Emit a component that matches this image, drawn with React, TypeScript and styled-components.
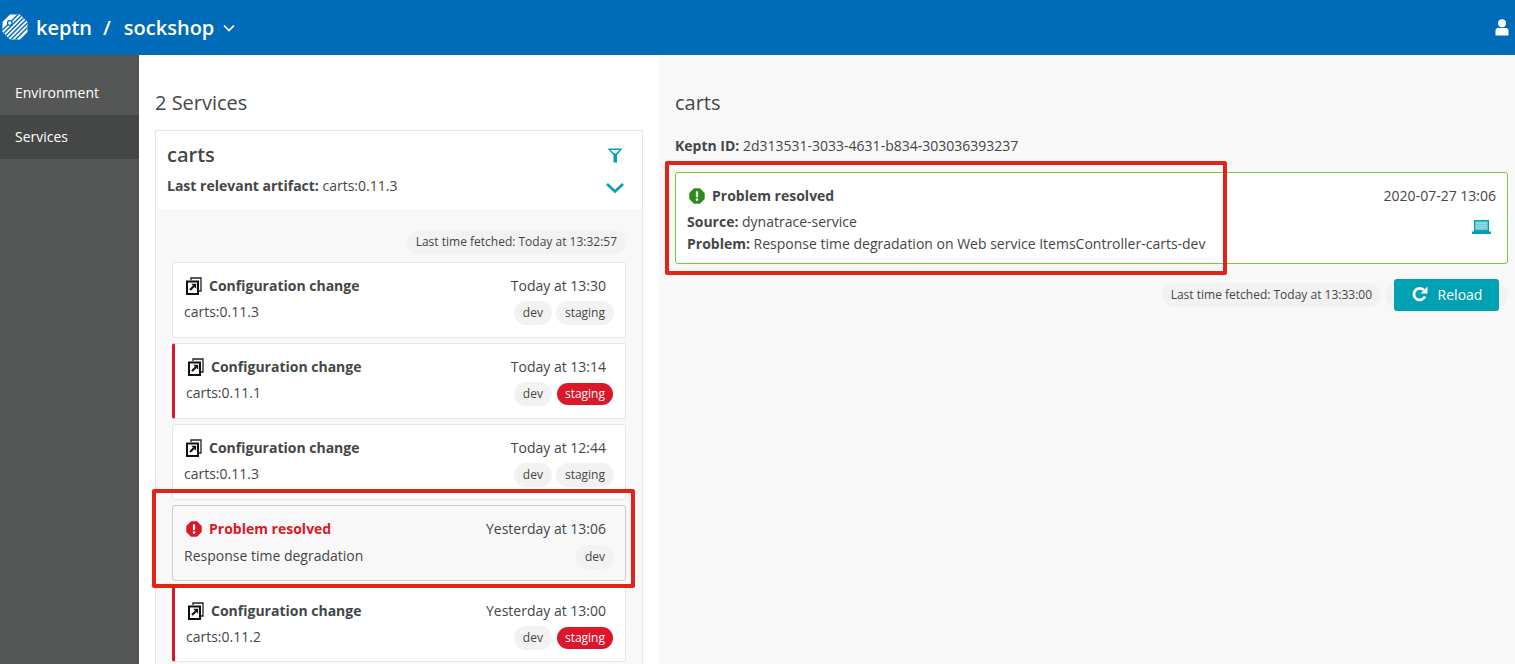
import React from "react";
import styled, { createGlobalStyle, css } from "styled-components";

const Global = createGlobalStyle`
  html, body { margin: 0; padding: 0; height: 100%; overflow: hidden; }
  body { font-family: "Open Sans", "Liberation Sans", sans-serif; font-size: 14px; line-height: 20px; color: #454646; }
  * { box-sizing: border-box; }
`;

const Page = styled.div`
  position: relative;
  width: 1515px;
  height: 664px;
  overflow: hidden;
  display: flex;
  flex-direction: column;
`;
const TopBar = styled.header`
  height: 55px;
  flex: none;
  background: #006bb8;
  color: #fff;
  display: flex;
  align-items: center;
  padding: 0 6px 0 2px;
`;
const LogoMark = styled.svg`
  width: 26px;
  height: 26px;
  margin-top: -2px;
`;
const Brand = styled.span`
  font-size: 20px;
  font-weight: 600;
  line-height: 55px;
  margin-left: 8px;
`;
const Slash = styled(Brand)`
  margin-left: 11px;
`;
const Project = styled(Brand)`
  margin-left: 13px;
`;
const BarChevron = styled.svg`
  width: 12px;
  height: 8px;
  margin: 1px 0 0 9px;
`;
const UserIcon = styled.svg`
  width: 14px;
  height: 17px;
  margin-left: auto;
`;
const Body = styled.div`
  flex: 1;
  display: flex;
  min-height: 0;
`;
const Sidebar = styled.nav`
  width: 139px;
  flex: none;
  background: #555656;
  padding-top: 16px;
`;
const NavItem = styled.div<{ $active?: boolean }>`
  height: 44px;
  line-height: 44px;
  padding-left: 15px;
  color: #fff;
  background: ${(p) => (p.$active ? "#454646" : "transparent")};
`;
const ListPane = styled.section`
  width: 520px;
  flex: none;
  background: #fff;
  padding: 36px 16px 0;
`;
const PaneTitle = styled.h2`
  margin: 0;
  font-size: 20px;
  font-weight: 400;
  line-height: 24px;
`;
const ServiceCard = styled.div`
  margin-top: 15px;
  border: 1px solid #e6e6e6;
  border-bottom: 0;
  height: 600px;
  background: #f8f8f8;
`;
const ServiceHead = styled.div`
  height: 78px;
  background: #fff;
  padding: 11px 18px 0 11px;
  display: flex;
  justify-content: space-between;
`;
const ServiceName = styled.div`
  font-size: 20px;
  font-weight: 600;
  line-height: 26px;
`;
const Artifact = styled.div`
  margin-top: 8px;
  line-height: 20px;
`;
const HeadIcons = styled.div`
  display: flex;
  flex-direction: column;
  align-items: center;
  padding-top: 6px;
  gap: 20px;
`;
const TealIcon = styled.svg`
  display: block;
  color: #00a1b2;
`;
const EventList = styled.div`
  padding: 21px 16px 0;
  display: flex;
  flex-direction: column;
`;
const Chip = styled.span`
  display: inline-flex;
  align-items: center;
  height: 24px;
  padding: 0 9px;
  border-radius: 12px;
  background: #f2f2f2;
  font-size: 12px;
  white-space: nowrap;
`;
const FetchedRow = styled.div`
  display: flex;
  justify-content: flex-end;
  margin-bottom: 8px;
`;
const EventTop = styled.div`
  display: flex;
  align-items: center;
  height: 24px;
  padding: 0 8px 0 2px;
`;
const EventTitle = styled.span<{ $error?: boolean }>`
  font-weight: 700;
  margin-left: 7px;
  color: ${(p) => (p.$error ? "#dc172a" : "#454646")};
`;
const When = styled.span`
  margin-left: auto;
`;
const EventBottom = styled.div`
  display: flex;
  align-items: flex-start;
  justify-content: space-between;
  margin-top: 2px;
  line-height: 24px;
`;
const EventCard = styled.div<{ $flag?: boolean; $selected?: boolean; $low?: boolean }>`
  height: 76px;
  flex: none;
  margin-bottom: 5px;
  background: ${(p) => (p.$selected ? "#f8f8f8" : "#fff")};
  border: 1px solid ${(p) => (p.$selected ? "#ccc" : "#e6e6e6")};
  border-radius: 3px;
  padding: ${(p) => (p.$low ? "12px" : "11px")} 11px 0;
  ${(p) => p.$flag && css`border-left: 3px solid #dc172a;`}
  ${(p) => p.$selected && css`${EventBottom} { margin-top: 3px; }`}
`;
const Tags = styled.div`
  display: flex;
  gap: 4px;
  align-items: center;
  padding-top: 1px;
  min-height: 25px;
`;
const Tag = styled.span<{ $error?: boolean }>`
  height: ${(p) => (p.$error ? "22px" : "24px")};
  padding: 0 ${(p) => (p.$error ? "8px" : "9px")};
  margin: ${(p) => (p.$error ? "0 1px" : "0")};
  border-radius: 12px;
  font-size: 12px;
  line-height: ${(p) => (p.$error ? "22px" : "24px")};
  background: ${(p) => (p.$error ? "#dc172a" : "#f2f2f2")};
  color: ${(p) => (p.$error ? "#fff" : "#454646")};
`;
const ConfigGlyph = styled.svg`
  width: 16px;
  height: 18px;
  flex: none;
  margin-top: -1px;
`;
const DetailPane = styled.section`
  flex: 1;
  background: #f8f8f8;
  padding: 36px 7px 0 16px;
`;
const KeptnId = styled.div`
  margin-top: 21px;
  line-height: 20px;
`;
const Strong = styled.b`
  font-weight: 700;
`;
const DetailCard = styled.div`
  margin-top: 16px;
  height: 92px;
  background: #fff;
  border: 1px solid #7dc540;
  border-radius: 3px;
  padding: 11px 11px 0 11px;
  display: flex;
  justify-content: space-between;
`;
const DetailHead = styled.div`
  display: flex;
  align-items: center;
  height: 24px;
  padding-left: 2px;
  margin-bottom: 3px;
`;
const DetailLine = styled.div`
  line-height: 22px;
`;
const DetailSide = styled.div`
  display: flex;
  flex-direction: column;
  align-items: flex-end;
  padding-top: 2px;
`;
const LaptopIcon = styled(TealIcon)`
  margin: 14px 5px 0 0;
`;
const ActionRow = styled.div`
  display: flex;
  justify-content: flex-end;
  align-items: center;
  gap: 4px;
  margin-top: 19px;
`;
const ReloadButton = styled.button`
  width: 105px;
  height: 32px;
  border: 0;
  border-radius: 3px;
  background: #00a1b2;
  color: #fff;
  font: 400 14px "Open Sans", sans-serif;
  display: flex;
  align-items: center;
  justify-content: center;
  gap: 10px;
  padding: 0 0 2px 1px;
`;
const Annotation = styled.div`
  position: absolute;
  border: 4px solid #e2231a;
  border-radius: 2px;
  pointer-events: none;
`;

const Logo = () => (
  <LogoMark viewBox="0 0 26 26" aria-hidden="true">
    <defs>
      <clipPath id="lg">
        <polygon points="8,0.5 18,0.5 25.5,8 25.5,18 18,25.5 8,25.5 0.5,18 0.5,8" />
      </clipPath>
    </defs>
    <polygon points="8,0.5 18,0.5 25.5,8 25.5,18 18,25.5 8,25.5 0.5,18 0.5,8" fill="#fff" />
    <g clipPath="url(#lg)" stroke="#006bb8" strokeWidth="1.4">
      {[16.5, 21, 25.5, 30, 34.5, 39].map((o) => (
        <line key={o} x1={o - 30} y1={30} x2={o} y2={0} />
      ))}
    </g>
    <circle cx="7.8" cy="9" r="2.3" fill="#fff" stroke="#006bb8" strokeWidth="1.3" />
  </LogoMark>
);

const ConfigIcon = () => (
  <ConfigGlyph viewBox="0 0 16 18" aria-hidden="true">
    <path d="M5 3V1h10v13h-2" fill="none" stroke="#222" strokeWidth="1.3" />
    <path d="M1 4.5h11v12.5H1z" fill="#fff" stroke="#111" strokeWidth="2" />
    <path d="M4 13l4-4" stroke="#111" strokeWidth="2.2" />
    <path d="M5.2 6.8h5v5z" fill="#111" />
  </ConfigGlyph>
);

const AlertIcon = ({ color }: { color: string }) => (
  <svg width="16" height="16" viewBox="0 0 16 16" aria-hidden="true">
    <polygon points="5,0.3 11,0.3 15.7,5 15.7,11 11,15.7 5,15.7 0.3,11 0.3,5" fill={color} />
    <rect x="6.9" y="3.3" width="2.2" height="6" rx="0.8" fill="#fff" />
    <circle cx="8" cy="11.6" r="1.3" fill="#fff" />
  </svg>
);

type EventData = { title: string; text: string; when: string; flag?: boolean; tags: { name: string; error?: boolean }[] };

const events: EventData[] = [
  { title: "Configuration change", text: "carts:0.11.3", when: "Today at 13:30", tags: [{ name: "dev" }, { name: "staging" }] },
  { title: "Configuration change", text: "carts:0.11.1", when: "Today at 13:14", flag: true, tags: [{ name: "dev" }, { name: "staging", error: true }] },
  { title: "Configuration change", text: "carts:0.11.3", when: "Today at 12:44", tags: [{ name: "dev" }, { name: "staging" }] },
];

const Event = ({ e, low }: { e: EventData; low?: boolean }) => (
  <EventCard $flag={e.flag} $low={low}>
    <EventTop>
      <ConfigIcon />
      <EventTitle>{e.title}</EventTitle>
      <When>{e.when}</When>
    </EventTop>
    <EventBottom>
      <span>{e.text}</span>
      <Tags>
        {e.tags.map((t) => (
          <Tag key={t.name} $error={t.error}>{t.name}</Tag>
        ))}
      </Tags>
    </EventBottom>
  </EventCard>
);

export default function App() {
  return (
    <Page>
      <Global />
      <TopBar>
        <Logo />
        <Brand>keptn</Brand>
        <Slash>/</Slash>
        <Project>sockshop</Project>
        <BarChevron viewBox="0 0 12 8" aria-hidden="true">
          <path d="M1 1.5l5 5 5-5" fill="none" stroke="#fff" strokeWidth="1.7" />
        </BarChevron>
        <UserIcon viewBox="0 0 14 17" aria-hidden="true">
          <circle cx="7" cy="4.3" r="4" fill="#fff" />
          <path d="M0.5 16.5V11.5C0.5 9.5 2 9 4 9h6c2 0 3.5.5 3.5 2.5v5z" fill="#fff" />
        </UserIcon>
      </TopBar>
      <Body>
        <Sidebar>
          <NavItem>Environment</NavItem>
          <NavItem $active>Services</NavItem>
        </Sidebar>
        <ListPane>
          <PaneTitle>2 Services</PaneTitle>
          <ServiceCard>
            <ServiceHead>
              <div>
                <ServiceName>carts</ServiceName>
                <Artifact><Strong>Last relevant artifact:</Strong> carts:0.11.3</Artifact>
              </div>
              <HeadIcons>
                <TealIcon width="16" height="15" viewBox="0 0 16 15" aria-hidden="true">
                  <path d="M0.5 0.5h15L10 7v7.5H6.5V7zM3.5 2l3.9 3.5h1.4L12.5 2z" fill="currentColor" fillRule="evenodd" />
                </TealIcon>
                <TealIcon width="18" height="10" viewBox="0 0 18 10" aria-hidden="true">
                  <path d="M1 1l8 7.5L17 1" fill="none" stroke="currentColor" strokeWidth="2.6" />
                </TealIcon>
              </HeadIcons>
            </ServiceHead>
            <EventList>
              <FetchedRow>
                <Chip>Last time fetched: Today at 13:32:57</Chip>
              </FetchedRow>
              {events.map((e, i) => (
                <Event key={i} e={e} />
              ))}
              <EventCard $selected>
                <EventTop>
                  <AlertIcon color="#dc172a" />
                  <EventTitle $error>Problem resolved</EventTitle>
                  <When>Yesterday at 13:06</When>
                </EventTop>
                <EventBottom>
                  <span>Response time degradation</span>
                  <Tags><Tag>dev</Tag></Tags>
                </EventBottom>
              </EventCard>
              <Event low e={{ title: "Configuration change", text: "carts:0.11.2", when: "Yesterday at 13:00", flag: true, tags: [{ name: "dev" }, { name: "staging", error: true }] }} />
            </EventList>
          </ServiceCard>
        </ListPane>
        <DetailPane>
          <PaneTitle>carts</PaneTitle>
          <KeptnId><Strong>Keptn ID:</Strong> 2d313531-3033-4631-b834-303036393237</KeptnId>
          <DetailCard>
            <div>
              <DetailHead>
                <AlertIcon color="#2e8b1e" />
                <EventTitle>Problem resolved</EventTitle>
              </DetailHead>
              <DetailLine><Strong>Source:</Strong> dynatrace-service</DetailLine>
              <DetailLine><Strong>Problem:</Strong> Response time degradation on Web service ItemsController-carts-dev</DetailLine>
            </div>
            <DetailSide>
              <span>2020-07-27 13:06</span>
              <LaptopIcon width="19" height="14" viewBox="0 0 19 14" aria-hidden="true">
                <path d="M2 0h15v11.5h2V14H0v-2.5h2z" fill="currentColor" />
                <rect x="3.2" y="1.3" width="12.6" height="8.8" fill="#6ccbd4" />
                <path d="M4.2 3.2h10.6M4.2 5.5h10.6M4.2 7.8h10.6" stroke="#d8f2f4" strokeWidth="0.9" strokeDasharray="1.2 0.8" />
              </LaptopIcon>
            </DetailSide>
          </DetailCard>
          <ActionRow>
            <Chip>Last time fetched: Today at 13:33:00</Chip>
            <Chip>
              <ReloadButton>
                <svg width="16" height="16" viewBox="0 0 16 16" aria-hidden="true">
                  <path d="M13 10.5A5.8 5.8 0 1 1 11.8 4" fill="none" stroke="#fff" strokeWidth="2.8" />
                  <polygon points="15.5,0.5 15.5,7.5 8.6,7.5" fill="#fff" />
                </svg>
                Reload
              </ReloadButton>
            </Chip>
          </ActionRow>
        </DetailPane>
      </Body>
      <Annotation style={{ left: 152, top: 489, width: 483, height: 99 }} />
      <Annotation style={{ left: 665, top: 161, width: 562, height: 114 }} />
    </Page>
  );
}
